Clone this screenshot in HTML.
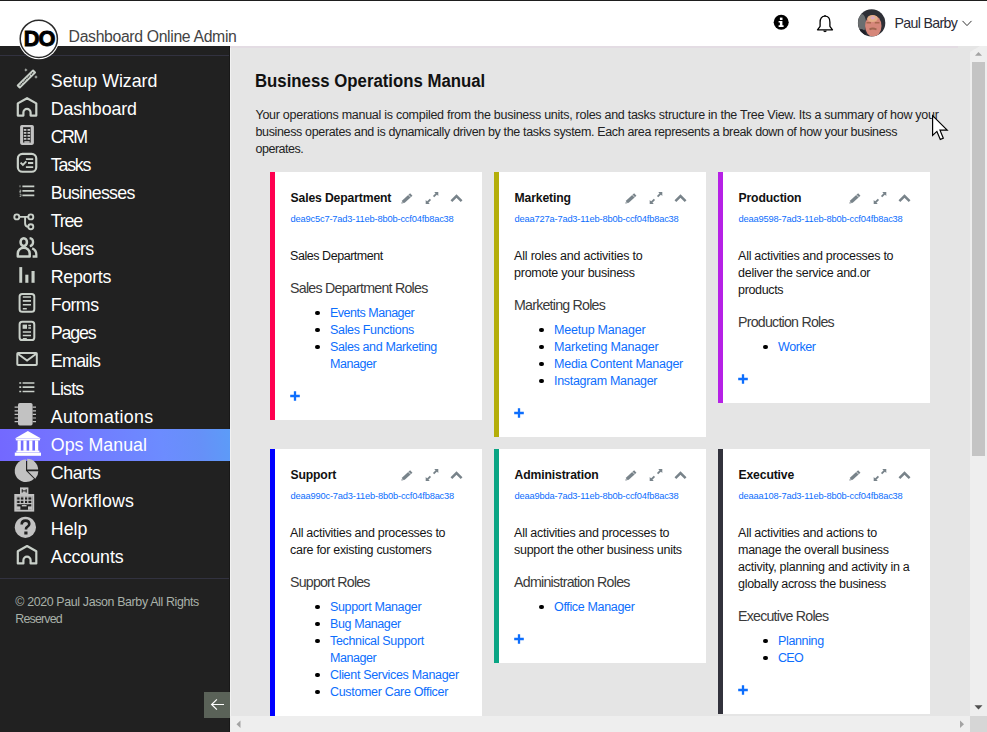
<!DOCTYPE html>
<html><head><meta charset="utf-8"><title>Business Operations Manual</title>
<style>
html,body{margin:0;padding:0;}
body{width:987px;height:732px;overflow:hidden;position:relative;background:#e5e5e5;font-family:"Liberation Sans",sans-serif;}
.t{position:absolute;white-space:nowrap;}
.a{position:absolute;}
svg{position:absolute;overflow:visible;}
</style></head><body>
<div class="a" style="left:0;top:0;width:987px;height:1px;background:#1e1e1e"></div><div class="a" style="left:0;top:1px;width:987px;height:45px;background:#fff"></div><div class="a" style="left:230px;top:46px;width:728px;height:2px;background:#e3dce3"></div><div class="a" style="left:0;top:46px;width:230px;height:686px;background:#212121"></div><div class="a" style="left:229px;top:46px;width:1px;height:686px;background:#181818"></div><div class="a" style="left:230px;top:48px;width:1px;height:684px;background:#f2f2f2"></div><div class="a" style="left:0;top:55px;width:229px;height:1px;background:#323240"></div><div class="a" style="left:0;top:578px;width:229px;height:1px;background:#323240"></div><svg style="left:0;top:0" width="80" height="70"><circle cx="38.8" cy="38.8" r="20.4" fill="#fff"/><circle cx="38.8" cy="38.8" r="18.6" fill="none" stroke="#2b2b2b" stroke-width="1.5"/></svg><div class="t" style="left:23.70px;top:25px;font-size:21.8px;line-height:27px;color:#000;font-weight:bold;letter-spacing:-0.900px;-webkit-text-stroke:0.9px #000;">DO</div>
<div class="t" style="left:68.60px;top:27px;font-size:15.8px;line-height:20px;color:#444;letter-spacing:-0.351px;">Dashboard Online Admin</div>
<div class="a" style="left:0;top:429px;width:230px;height:32px;background:linear-gradient(80deg,#7368ff 0%,#7474ff 26%,#6c8cff 70%,#6690f8 86%,#5c9cf8 100%)"></div><div class="t" style="left:50.80px;top:70px;font-size:17.8px;line-height:22px;color:#ffffff;letter-spacing:-0.012px;">Setup Wizard</div>
<div class="t" style="left:50.80px;top:98px;font-size:17.8px;line-height:22px;color:#ffffff;letter-spacing:-0.110px;">Dashboard</div>
<div class="t" style="left:50.80px;top:126px;font-size:17.8px;line-height:22px;color:#ffffff;letter-spacing:-1.665px;">CRM</div>
<div class="t" style="left:50.80px;top:154px;font-size:17.8px;line-height:22px;color:#ffffff;letter-spacing:-1.199px;">Tasks</div>
<div class="t" style="left:50.80px;top:182px;font-size:17.8px;line-height:22px;color:#ffffff;letter-spacing:-0.714px;">Businesses</div>
<div class="t" style="left:50.80px;top:210px;font-size:17.8px;line-height:22px;color:#ffffff;letter-spacing:-1.213px;">Tree</div>
<div class="t" style="left:50.80px;top:238px;font-size:17.8px;line-height:22px;color:#ffffff;letter-spacing:-0.769px;">Users</div>
<div class="t" style="left:50.80px;top:266px;font-size:17.8px;line-height:22px;color:#ffffff;letter-spacing:-0.286px;">Reports</div>
<div class="t" style="left:50.80px;top:294px;font-size:17.8px;line-height:22px;color:#ffffff;letter-spacing:-0.532px;">Forms</div>
<div class="t" style="left:50.80px;top:322px;font-size:17.8px;line-height:22px;color:#ffffff;letter-spacing:-1.166px;">Pages</div>
<div class="t" style="left:50.80px;top:350px;font-size:17.8px;line-height:22px;color:#ffffff;letter-spacing:-0.664px;">Emails</div>
<div class="t" style="left:50.80px;top:378px;font-size:17.8px;line-height:22px;color:#ffffff;letter-spacing:-0.774px;">Lists</div>
<div class="t" style="left:50.80px;top:406px;font-size:17.8px;line-height:22px;color:#ffffff;letter-spacing:0.345px;">Automations</div>
<div class="t" style="left:50.80px;top:434px;font-size:17.8px;line-height:22px;color:#ffffff;letter-spacing:0.036px;">Ops Manual</div>
<div class="t" style="left:50.80px;top:462px;font-size:17.8px;line-height:22px;color:#ffffff;letter-spacing:-0.444px;">Charts</div>
<div class="t" style="left:50.80px;top:490px;font-size:17.8px;line-height:22px;color:#ffffff;letter-spacing:0.193px;">Workflows</div>
<div class="t" style="left:50.80px;top:518px;font-size:17.8px;line-height:22px;color:#ffffff;letter-spacing:-0.005px;">Help</div>
<div class="t" style="left:50.80px;top:546px;font-size:17.8px;line-height:22px;color:#ffffff;letter-spacing:-0.030px;">Accounts</div>
<div class="t" style="left:15.30px;top:594px;font-size:12.4px;line-height:16px;color:#a9b1a9;letter-spacing:-0.359px;">© 2020 Paul Jason Barby All Rights</div>
<div class="t" style="left:15.30px;top:611px;font-size:12.4px;line-height:16px;color:#a9b1a9;letter-spacing:-0.796px;">Reserved</div>
<div class="a" style="left:204px;top:692px;width:26px;height:26px;background:#5a6258"></div><svg style="left:204px;top:692px" width="26" height="26"><path d="M7.6 12.5H20M12.9 7.4L7.6 12.5L12.9 17.6" stroke="#fff" stroke-width="1.2" fill="none"/></svg><div class="t" style="left:894.50px;top:14px;font-size:14.2px;line-height:18px;color:#2a2a35;letter-spacing:-0.663px;">Paul Barby</div>
<svg style="left:962px;top:20px" width="11" height="8"><path d="M0.5 0.9L5 5.6L9.5 0.9" stroke="#333" stroke-width="1" fill="none"/></svg><svg style="left:856px;top:8px" width="32" height="32"><defs><clipPath id="av"><circle cx="15.6" cy="14.9" r="13.7"/></clipPath></defs><g clip-path="url(#av)"><rect width="32" height="32" fill="#2e2f36"/><ellipse cx="6" cy="15" rx="4" ry="9" fill="#6a6e70"/><ellipse cx="17.3" cy="18" rx="8.2" ry="10.8" fill="#d6877a"/><ellipse cx="16.5" cy="10.5" rx="5.2" ry="3.4" fill="#e4ae88"/><ellipse cx="16.8" cy="9.8" rx="2.2" ry="1.6" fill="#d9a8c0"/><path d="M10.5 14.8H15M18.8 14.8H23.5" stroke="#a8684e" stroke-width="1.6"/><path d="M13.5 21.5Q16.5 19.5 20.5 21.5" stroke="#a06650" stroke-width="1.8" fill="none"/><ellipse cx="5" cy="27" rx="5" ry="6" fill="#1e1e26"/></g></svg><div class="t" style="left:254.90px;top:69px;font-size:19.2px;line-height:24px;color:#111;font-weight:bold;transform:scaleX(0.8743);transform-origin:0 0;">Business Operations Manual</div>
<div class="t" style="left:255.50px;top:107px;font-size:12.5px;line-height:16px;color:#222;letter-spacing:-0.274px;">Your operations manual is compiled from the business units, roles and tasks structure in the Tree View. Its a summary of how your</div>
<div class="t" style="left:255.50px;top:124px;font-size:12.5px;line-height:16px;color:#222;letter-spacing:-0.354px;">business operates and is dynamically driven by the tasks system. Each area represents a break down of how your business</div>
<div class="t" style="left:255.50px;top:141px;font-size:12.5px;line-height:16px;color:#222;letter-spacing:-0.489px;">operates.</div>
<div class="a" style="left:270px;top:172px;width:5px;height:248px;background:#ff0050"></div><div class="a" style="left:275px;top:172px;width:207px;height:248px;background:#fff"></div><div class="t" style="left:290.50px;top:191px;font-size:12.2px;line-height:15px;color:#111;font-weight:bold;letter-spacing:-0.137px;">Sales Department</div>
<div class="t" style="left:290.50px;top:213px;font-size:9.3px;line-height:12px;color:#0d6efd;letter-spacing:-0.174px;">dea9c5c7-7ad3-11eb-8b0b-ccf04fb8ac38</div>
<div class="t" style="left:290.10px;top:248px;font-size:12.5px;line-height:16px;color:#151515;letter-spacing:-0.457px;">Sales Department</div>
<div class="t" style="left:290.00px;top:279px;font-size:14.2px;line-height:18px;color:#3a3a3a;letter-spacing:-0.738px;">Sales Department Roles</div>
<div class="a" style="left:315.3px;top:310.90px;width:4.3px;height:4.3px;border-radius:50%;background:#000"></div><div class="t" style="left:330.00px;top:305px;font-size:12.5px;line-height:16px;color:#0d6efd;letter-spacing:-0.487px;">Events Manager</div>
<div class="a" style="left:315.3px;top:327.90px;width:4.3px;height:4.3px;border-radius:50%;background:#000"></div><div class="t" style="left:330.00px;top:322px;font-size:12.5px;line-height:16px;color:#0d6efd;letter-spacing:-0.330px;">Sales Functions</div>
<div class="a" style="left:315.3px;top:344.90px;width:4.3px;height:4.3px;border-radius:50%;background:#000"></div><div class="t" style="left:330.00px;top:339px;font-size:12.5px;line-height:16px;color:#0d6efd;letter-spacing:-0.369px;">Sales and Marketing</div>
<div class="t" style="left:330.00px;top:356px;font-size:12.5px;line-height:16px;color:#0d6efd;letter-spacing:-0.428px;">Manager</div>
<svg style="left:290px;top:391.20px" width="10" height="10"><path d="M5 0.2V9.8M0.2 5H9.8" stroke="#0d6efd" stroke-width="2.3"/></svg><svg style="left:401px;top:193px" width="12" height="12"><path d="M0.4 10.6L1.45 7.35L9.15 0.35L11.45 2.85L3.75 9.85Z" fill="#78838a"/><path d="M7.3 1.75L9.9 4.55" stroke="#fff" stroke-width="0.7"/><path d="M0.4 10.6L1.2 8.2L2.9 10Z" fill="#aab0b4"/></svg><svg style="left:425px;top:191px" width="15" height="15"><path d="M13.3 0.9V5L9.2 0.9Z M0.7 13.1V9L4.8 13.1Z" fill="#78838a"/><path d="M12.2 2L8.6 5.6M1.8 12L5.4 8.4" stroke="#78838a" stroke-width="1.8"/></svg><svg style="left:450px;top:193px" width="14" height="10"><path d="M1.4 8.2L6.5 3.1L11.6 8.2" stroke="#78838a" stroke-width="2.5" fill="none"/></svg><div class="a" style="left:494px;top:172px;width:5px;height:265px;background:#b4ae0a"></div><div class="a" style="left:499px;top:172px;width:207px;height:265px;background:#fff"></div><div class="t" style="left:514.50px;top:191px;font-size:12.2px;line-height:15px;color:#111;font-weight:bold;letter-spacing:-0.144px;">Marketing</div>
<div class="t" style="left:514.50px;top:213px;font-size:9.3px;line-height:12px;color:#0d6efd;letter-spacing:-0.175px;">deaa727a-7ad3-11eb-8b0b-ccf04fb8ac38</div>
<div class="t" style="left:514.10px;top:248px;font-size:12.5px;line-height:16px;color:#151515;letter-spacing:-0.207px;">All roles and activities to</div>
<div class="t" style="left:514.10px;top:265px;font-size:12.5px;line-height:16px;color:#151515;letter-spacing:-0.273px;">promote your business</div>
<div class="t" style="left:514.00px;top:296px;font-size:14.2px;line-height:18px;color:#3a3a3a;letter-spacing:-0.769px;">Marketing Roles</div>
<div class="a" style="left:539.3px;top:327.90px;width:4.3px;height:4.3px;border-radius:50%;background:#000"></div><div class="t" style="left:554.00px;top:322px;font-size:12.5px;line-height:16px;color:#0d6efd;letter-spacing:-0.223px;">Meetup Manager</div>
<div class="a" style="left:539.3px;top:344.90px;width:4.3px;height:4.3px;border-radius:50%;background:#000"></div><div class="t" style="left:554.00px;top:339px;font-size:12.5px;line-height:16px;color:#0d6efd;letter-spacing:-0.187px;">Marketing Manager</div>
<div class="a" style="left:539.3px;top:361.90px;width:4.3px;height:4.3px;border-radius:50%;background:#000"></div><div class="t" style="left:554.00px;top:356px;font-size:12.5px;line-height:16px;color:#0d6efd;letter-spacing:-0.241px;">Media Content Manager</div>
<div class="a" style="left:539.3px;top:378.90px;width:4.3px;height:4.3px;border-radius:50%;background:#000"></div><div class="t" style="left:554.00px;top:373px;font-size:12.5px;line-height:16px;color:#0d6efd;letter-spacing:-0.305px;">Instagram Manager</div>
<svg style="left:514px;top:408.20px" width="10" height="10"><path d="M5 0.2V9.8M0.2 5H9.8" stroke="#0d6efd" stroke-width="2.3"/></svg><svg style="left:625px;top:193px" width="12" height="12"><path d="M0.4 10.6L1.45 7.35L9.15 0.35L11.45 2.85L3.75 9.85Z" fill="#78838a"/><path d="M7.3 1.75L9.9 4.55" stroke="#fff" stroke-width="0.7"/><path d="M0.4 10.6L1.2 8.2L2.9 10Z" fill="#aab0b4"/></svg><svg style="left:649px;top:191px" width="15" height="15"><path d="M13.3 0.9V5L9.2 0.9Z M0.7 13.1V9L4.8 13.1Z" fill="#78838a"/><path d="M12.2 2L8.6 5.6M1.8 12L5.4 8.4" stroke="#78838a" stroke-width="1.8"/></svg><svg style="left:674px;top:193px" width="14" height="10"><path d="M1.4 8.2L6.5 3.1L11.6 8.2" stroke="#78838a" stroke-width="2.5" fill="none"/></svg><div class="a" style="left:718px;top:172px;width:5px;height:231px;background:#b620e6"></div><div class="a" style="left:723px;top:172px;width:207px;height:231px;background:#fff"></div><div class="t" style="left:738.50px;top:191px;font-size:12.2px;line-height:15px;color:#111;font-weight:bold;letter-spacing:-0.143px;">Production</div>
<div class="t" style="left:738.50px;top:213px;font-size:9.3px;line-height:12px;color:#0d6efd;letter-spacing:-0.175px;">deaa9598-7ad3-11eb-8b0b-ccf04fb8ac38</div>
<div class="t" style="left:738.10px;top:248px;font-size:12.5px;line-height:16px;color:#151515;letter-spacing:-0.284px;">All activities and processes to</div>
<div class="t" style="left:738.10px;top:265px;font-size:12.5px;line-height:16px;color:#151515;letter-spacing:-0.290px;">deliver the service and.or</div>
<div class="t" style="left:738.10px;top:282px;font-size:12.5px;line-height:16px;color:#151515;letter-spacing:-0.356px;">products</div>
<div class="t" style="left:738.00px;top:313px;font-size:14.2px;line-height:18px;color:#3a3a3a;letter-spacing:-0.757px;">Production Roles</div>
<div class="a" style="left:763.3px;top:344.90px;width:4.3px;height:4.3px;border-radius:50%;background:#000"></div><div class="t" style="left:778.00px;top:339px;font-size:12.5px;line-height:16px;color:#0d6efd;letter-spacing:-0.417px;">Worker</div>
<svg style="left:738px;top:374.20px" width="10" height="10"><path d="M5 0.2V9.8M0.2 5H9.8" stroke="#0d6efd" stroke-width="2.3"/></svg><svg style="left:849px;top:193px" width="12" height="12"><path d="M0.4 10.6L1.45 7.35L9.15 0.35L11.45 2.85L3.75 9.85Z" fill="#78838a"/><path d="M7.3 1.75L9.9 4.55" stroke="#fff" stroke-width="0.7"/><path d="M0.4 10.6L1.2 8.2L2.9 10Z" fill="#aab0b4"/></svg><svg style="left:873px;top:191px" width="15" height="15"><path d="M13.3 0.9V5L9.2 0.9Z M0.7 13.1V9L4.8 13.1Z" fill="#78838a"/><path d="M12.2 2L8.6 5.6M1.8 12L5.4 8.4" stroke="#78838a" stroke-width="1.8"/></svg><svg style="left:898px;top:193px" width="14" height="10"><path d="M1.4 8.2L6.5 3.1L11.6 8.2" stroke="#78838a" stroke-width="2.5" fill="none"/></svg><div class="a" style="left:270px;top:449px;width:5px;height:267px;background:#0000ff"></div><div class="a" style="left:275px;top:449px;width:207px;height:267px;background:#fff"></div><div class="t" style="left:290.50px;top:468px;font-size:12.2px;line-height:15px;color:#111;font-weight:bold;letter-spacing:-0.156px;">Support</div>
<div class="t" style="left:290.50px;top:490px;font-size:9.3px;line-height:12px;color:#0d6efd;letter-spacing:-0.175px;">deaa990c-7ad3-11eb-8b0b-ccf04fb8ac38</div>
<div class="t" style="left:290.10px;top:525px;font-size:12.5px;line-height:16px;color:#151515;letter-spacing:-0.284px;">All activities and processes to</div>
<div class="t" style="left:290.10px;top:542px;font-size:12.5px;line-height:16px;color:#151515;letter-spacing:-0.299px;">care for existing customers</div>
<div class="t" style="left:290.00px;top:573px;font-size:14.2px;line-height:18px;color:#3a3a3a;letter-spacing:-0.787px;">Support Roles</div>
<div class="a" style="left:315.3px;top:604.90px;width:4.3px;height:4.3px;border-radius:50%;background:#000"></div><div class="t" style="left:330.00px;top:599px;font-size:12.5px;line-height:16px;color:#0d6efd;letter-spacing:-0.359px;">Support Manager</div>
<div class="a" style="left:315.3px;top:621.90px;width:4.3px;height:4.3px;border-radius:50%;background:#000"></div><div class="t" style="left:330.00px;top:616px;font-size:12.5px;line-height:16px;color:#0d6efd;letter-spacing:-0.390px;">Bug Manager</div>
<div class="a" style="left:315.3px;top:638.90px;width:4.3px;height:4.3px;border-radius:50%;background:#000"></div><div class="t" style="left:330.00px;top:633px;font-size:12.5px;line-height:16px;color:#0d6efd;letter-spacing:-0.323px;">Technical Support</div>
<div class="t" style="left:330.00px;top:650px;font-size:12.5px;line-height:16px;color:#0d6efd;letter-spacing:-0.428px;">Manager</div>
<div class="a" style="left:315.3px;top:672.90px;width:4.3px;height:4.3px;border-radius:50%;background:#000"></div><div class="t" style="left:330.00px;top:667px;font-size:12.5px;line-height:16px;color:#0d6efd;letter-spacing:-0.322px;">Client Services Manager</div>
<div class="a" style="left:315.3px;top:689.90px;width:4.3px;height:4.3px;border-radius:50%;background:#000"></div><div class="t" style="left:330.00px;top:684px;font-size:12.5px;line-height:16px;color:#0d6efd;letter-spacing:-0.324px;">Customer Care Officer</div>
<svg style="left:290px;top:719.20px" width="10" height="10"><path d="M5 0.2V9.8M0.2 5H9.8" stroke="#0d6efd" stroke-width="2.3"/></svg><svg style="left:401px;top:470px" width="12" height="12"><path d="M0.4 10.6L1.45 7.35L9.15 0.35L11.45 2.85L3.75 9.85Z" fill="#78838a"/><path d="M7.3 1.75L9.9 4.55" stroke="#fff" stroke-width="0.7"/><path d="M0.4 10.6L1.2 8.2L2.9 10Z" fill="#aab0b4"/></svg><svg style="left:425px;top:468px" width="15" height="15"><path d="M13.3 0.9V5L9.2 0.9Z M0.7 13.1V9L4.8 13.1Z" fill="#78838a"/><path d="M12.2 2L8.6 5.6M1.8 12L5.4 8.4" stroke="#78838a" stroke-width="1.8"/></svg><svg style="left:450px;top:470px" width="14" height="10"><path d="M1.4 8.2L6.5 3.1L11.6 8.2" stroke="#78838a" stroke-width="2.5" fill="none"/></svg><div class="a" style="left:494px;top:449px;width:5px;height:214px;background:#0aa584"></div><div class="a" style="left:499px;top:449px;width:207px;height:214px;background:#fff"></div><div class="t" style="left:514.50px;top:468px;font-size:12.2px;line-height:15px;color:#111;font-weight:bold;letter-spacing:-0.132px;">Administration</div>
<div class="t" style="left:514.50px;top:490px;font-size:9.3px;line-height:12px;color:#0d6efd;letter-spacing:-0.175px;">deaa9bda-7ad3-11eb-8b0b-ccf04fb8ac38</div>
<div class="t" style="left:514.10px;top:525px;font-size:12.5px;line-height:16px;color:#151515;letter-spacing:-0.284px;">All activities and processes to</div>
<div class="t" style="left:514.10px;top:542px;font-size:12.5px;line-height:16px;color:#151515;letter-spacing:-0.297px;">support the other business units</div>
<div class="t" style="left:514.00px;top:573px;font-size:14.2px;line-height:18px;color:#3a3a3a;letter-spacing:-0.720px;">Administration Roles</div>
<div class="a" style="left:539.3px;top:604.90px;width:4.3px;height:4.3px;border-radius:50%;background:#000"></div><div class="t" style="left:554.00px;top:599px;font-size:12.5px;line-height:16px;color:#0d6efd;letter-spacing:-0.341px;">Office Manager</div>
<svg style="left:514px;top:634.20px" width="10" height="10"><path d="M5 0.2V9.8M0.2 5H9.8" stroke="#0d6efd" stroke-width="2.3"/></svg><svg style="left:625px;top:470px" width="12" height="12"><path d="M0.4 10.6L1.45 7.35L9.15 0.35L11.45 2.85L3.75 9.85Z" fill="#78838a"/><path d="M7.3 1.75L9.9 4.55" stroke="#fff" stroke-width="0.7"/><path d="M0.4 10.6L1.2 8.2L2.9 10Z" fill="#aab0b4"/></svg><svg style="left:649px;top:468px" width="15" height="15"><path d="M13.3 0.9V5L9.2 0.9Z M0.7 13.1V9L4.8 13.1Z" fill="#78838a"/><path d="M12.2 2L8.6 5.6M1.8 12L5.4 8.4" stroke="#78838a" stroke-width="1.8"/></svg><svg style="left:674px;top:470px" width="14" height="10"><path d="M1.4 8.2L6.5 3.1L11.6 8.2" stroke="#78838a" stroke-width="2.5" fill="none"/></svg><div class="a" style="left:718px;top:449px;width:5px;height:265px;background:#32323c"></div><div class="a" style="left:723px;top:449px;width:207px;height:265px;background:#fff"></div><div class="t" style="left:738.50px;top:468px;font-size:12.2px;line-height:15px;color:#111;font-weight:bold;letter-spacing:-0.142px;">Executive</div>
<div class="t" style="left:738.50px;top:490px;font-size:9.3px;line-height:12px;color:#0d6efd;letter-spacing:-0.175px;">deaaa108-7ad3-11eb-8b0b-ccf04fb8ac38</div>
<div class="t" style="left:738.10px;top:525px;font-size:12.5px;line-height:16px;color:#151515;letter-spacing:-0.272px;">All activities and actions to</div>
<div class="t" style="left:738.10px;top:542px;font-size:12.5px;line-height:16px;color:#151515;letter-spacing:-0.318px;">manage the overall business</div>
<div class="t" style="left:738.10px;top:559px;font-size:12.5px;line-height:16px;color:#151515;letter-spacing:-0.269px;">activity, planning and activity in a</div>
<div class="t" style="left:738.10px;top:576px;font-size:12.5px;line-height:16px;color:#151515;letter-spacing:-0.301px;">globally across the business</div>
<div class="t" style="left:738.00px;top:607px;font-size:14.2px;line-height:18px;color:#3a3a3a;letter-spacing:-0.764px;">Executive Roles</div>
<div class="a" style="left:763.3px;top:638.90px;width:4.3px;height:4.3px;border-radius:50%;background:#000"></div><div class="t" style="left:778.00px;top:633px;font-size:12.5px;line-height:16px;color:#0d6efd;letter-spacing:-0.361px;">Planning</div>
<div class="a" style="left:763.3px;top:655.90px;width:4.3px;height:4.3px;border-radius:50%;background:#000"></div><div class="t" style="left:778.00px;top:650px;font-size:12.5px;line-height:16px;color:#0d6efd;letter-spacing:-0.704px;">CEO</div>
<svg style="left:738px;top:685.20px" width="10" height="10"><path d="M5 0.2V9.8M0.2 5H9.8" stroke="#0d6efd" stroke-width="2.3"/></svg><svg style="left:849px;top:470px" width="12" height="12"><path d="M0.4 10.6L1.45 7.35L9.15 0.35L11.45 2.85L3.75 9.85Z" fill="#78838a"/><path d="M7.3 1.75L9.9 4.55" stroke="#fff" stroke-width="0.7"/><path d="M0.4 10.6L1.2 8.2L2.9 10Z" fill="#aab0b4"/></svg><svg style="left:873px;top:468px" width="15" height="15"><path d="M13.3 0.9V5L9.2 0.9Z M0.7 13.1V9L4.8 13.1Z" fill="#78838a"/><path d="M12.2 2L8.6 5.6M1.8 12L5.4 8.4" stroke="#78838a" stroke-width="1.8"/></svg><svg style="left:898px;top:470px" width="14" height="10"><path d="M1.4 8.2L6.5 3.1L11.6 8.2" stroke="#78838a" stroke-width="2.5" fill="none"/></svg><svg style="left:0;top:0" width="230" height="732"><g transform="rotate(-44.5 26.4 79)"><rect x="14.7" y="76.6" width="23.4" height="4.8" rx="1" fill="#c9d0c9"/><path d="M17 79H31.2M32.6 79H36.2" stroke="#212121" stroke-width="1.2" stroke-dasharray="1.3 0.6"/></g><path d="M25.9 68.10000000000001L26.4 69.4L27.7 69.9L26.4 70.4L25.9 71.7L25.4 70.4L24.099999999999998 69.9L25.4 69.4Z M36 75.1L36.5 76.5L37.9 77L36.5 77.5L36 78.9L35.5 77.5L34.1 77L35.5 76.5Z" fill="#c9d0c9"/><path d="M23.4 115.6H17.8V103.4L27.05 98.2L36.3 103.4V115.6H30.6V112.5A3.6 3.6 0 0 0 23.4 112.5Z" fill="none" stroke="#c9d0c9" stroke-width="2.2" stroke-linejoin="round"/><rect x="20.1" y="125" width="13.8" height="19.9" rx="1.8" fill="#c2c2c2"/><rect x="23.1" y="127.2" width="7.6" height="15.4" fill="#212121"/><rect x="23.8" y="129.0" width="2.6" height="1.8" fill="#c2c2c2"/><rect x="27.5" y="129.0" width="2.6" height="1.8" fill="#c2c2c2"/><rect x="23.8" y="132.0" width="2.6" height="1.8" fill="#c2c2c2"/><rect x="27.5" y="132.0" width="2.6" height="1.8" fill="#c2c2c2"/><rect x="23.8" y="135.0" width="2.6" height="1.8" fill="#c2c2c2"/><rect x="27.5" y="135.0" width="2.6" height="1.8" fill="#c2c2c2"/><rect x="23.8" y="138.0" width="2.6" height="1.8" fill="#c2c2c2"/><rect x="27.5" y="138.0" width="2.6" height="1.8" fill="#c2c2c2"/><rect x="24.3" y="141.2" width="5.3" height="1.6" fill="#c2c2c2"/><rect x="17.85" y="153.95" width="18.4" height="17.8" rx="4.6" fill="none" stroke="#c9d0c9" stroke-width="2.2"/><path d="M25.9 159.1H33.2M28 163H33.2M25.9 167.05H33.2" stroke="#c9d0c9" stroke-width="1.8"/><path d="M20.6 162.6L22.9 164.9L26.3 161.4" stroke="#c9d0c9" stroke-width="1.9" fill="none"/><path d="M22.4 186.3H34.3M22.4 190.9H34.3M22.4 195.3H34.3" stroke="#c9d0c9" stroke-width="1.8"/><path d="M20 185.3V187.3M19.6 190.2H20.8V191.6H19.6V192.2H21M19.6 194.2H21V196.4H19.6" stroke="#c9d0c9" stroke-width="0.7" fill="none"/><g fill="none" stroke="#c9d0c9" stroke-width="1.9"><circle cx="16.8" cy="216.9" r="2.5"/><circle cx="30.8" cy="216.9" r="2.5"/><circle cx="30.8" cy="226.8" r="2.5"/><path d="M19.3 216.9H28.3M25.1 216.9V223.3Q25.1 226.8 28.3 226.8"/></g><g fill="none" stroke="#c9d0c9" stroke-width="2.5" stroke-linejoin="round"><ellipse cx="23.75" cy="242.1" rx="3.2" ry="3.9"/><path d="M17.8 256.6V253.4A5.95 5.6 0 0 1 29.7 253.4V256.6Z"/></g><g fill="none" stroke="#c9d0c9" stroke-width="2.3"><path d="M29.6 238.1A4 4.1 0 0 1 29.8 246.2"/><path d="M32.2 248.4Q36.3 250.2 36.3 254.2V256.5H32.6"/></g><rect x="19.3" y="267.1" width="2.9" height="15.7" fill="#c9d0c9"/><rect x="25.3" y="274.7" width="3.1" height="8.1" fill="#c9d0c9"/><rect x="31.5" y="271" width="3.1" height="11.8" fill="#c9d0c9"/><rect x="19.6" y="294" width="14.7" height="17.8" rx="2.6" fill="none" stroke="#c9d0c9" stroke-width="2"/><path d="M22.8 297H31M22.8 300.9H31M22.8 304.8H31M22.8 308.8H26.8" stroke="#c9d0c9" stroke-width="1.6"/><rect x="19.6" y="321.8" width="14.7" height="18.2" rx="2.6" fill="none" stroke="#c9d0c9" stroke-width="2"/><rect x="22.6" y="324.6" width="4.4" height="4.2" fill="#c9d0c9"/><path d="M28.3 325.4H31M28.3 328.1H31M22.8 332H31M22.8 335.5H31M22.8 338.8H26.8" stroke="#c9d0c9" stroke-width="1.5"/><rect x="17.3" y="353" width="19.5" height="12" rx="0.8" fill="none" stroke="#c9d0c9" stroke-width="2"/><path d="M17.8 353.8L27.05 360.6L36.3 353.8" fill="none" stroke="#c9d0c9" stroke-width="2"/><path d="M22.6 383H34.4M22.6 387.2H34.4M22.6 391.5H34.4M19.3 383H21.2M19.3 387.2H21.2M19.3 391.5H21.2" stroke="#c9d0c9" stroke-width="1.7"/><rect x="18" y="403" width="14.6" height="22.6" rx="1.8" fill="#c2c2c2"/><path d="M14.6 407.2H18M32.6 407.2H36" stroke="#c2c2c2" stroke-width="1.2"/><path d="M14.6 410.8H18M32.6 410.8H36" stroke="#c2c2c2" stroke-width="1.2"/><path d="M14.6 414.4H18M32.6 414.4H36" stroke="#c2c2c2" stroke-width="1.2"/><path d="M14.6 418H18M32.6 418H36" stroke="#c2c2c2" stroke-width="1.2"/><path d="M14.6 421.6H18M32.6 421.6H36" stroke="#c2c2c2" stroke-width="1.2"/><path d="M14.8 438.4L27.9 431L41 438.4Z" fill="#fff"/><rect x="15.8" y="438.6" width="24.2" height="1.8" fill="#fff"/><rect x="14.8" y="452.6" width="26.2" height="3.2" fill="#fff"/><rect x="16.4" y="450.6" width="23" height="1.8" fill="#fff"/><rect x="17.6" y="440.4" width="3.2" height="10.4" fill="#fff"/><rect x="23.4" y="440.4" width="3.2" height="10.4" fill="#fff"/><rect x="29.2" y="440.4" width="3.2" height="10.4" fill="#fff"/><rect x="35.0" y="440.4" width="3.2" height="10.4" fill="#fff"/><path d="M26 470.8V459.5A11.3 11.3 0 1 0 34 478.8Z" fill="#c2c2c2"/><path d="M27.2 469.6V458.7A10.9 10.9 0 0 1 38.1 469.6Z" fill="#c2c2c2"/><path d="M27.9 471.3H38.3A10.6 10.6 0 0 1 35.3 478.7Z" fill="#c2c2c2"/><rect x="20" y="487.4" width="8.4" height="7" fill="#c2c2c2"/><path d="M22.2 489.2V492.6M26.2 489.2V492.6M22.2 490.9H26.2" stroke="#212121" stroke-width="1"/><rect x="14.3" y="494" width="19.9" height="17.6" fill="#c2c2c2"/><rect x="16.2" y="496.2" width="16.1" height="13.6" fill="#212121"/><rect x="16.2" y="496.2" width="16.1" height="1.2" fill="#c2c2c2"/><rect x="16.2" y="499.6" width="16.1" height="1.2" fill="#c2c2c2"/><rect x="16.2" y="503" width="16.1" height="1.2" fill="#c2c2c2"/><rect x="19.6" y="496.2" width="1.2" height="8" fill="#c2c2c2"/><rect x="23.4" y="496.2" width="1.6" height="8" fill="#c2c2c2"/><rect x="27.2" y="496.2" width="1.2" height="8" fill="#c2c2c2"/><rect x="16.2" y="496.2" width="1" height="13.6" fill="#c2c2c2"/><rect x="31.3" y="496.2" width="1" height="13.6" fill="#c2c2c2"/><rect x="16.2" y="506.4" width="4.2" height="3.4" fill="#c2c2c2"/><rect x="28" y="506.4" width="4.2" height="3.4" fill="#c2c2c2"/><rect x="21.8" y="505" width="4.8" height="1.4" fill="#c2c2c2"/><circle cx="25.4" cy="527.3" r="10.6" fill="#c2c2c2"/><path d="M21.7 524.4Q21.7 520.6 25.5 520.6Q29.3 520.6 29.3 524Q29.3 526 27 527.2Q26 527.8 26 529V529.6" fill="none" stroke="#212121" stroke-width="2.6"/><rect x="24.3" y="531.5" width="3.2" height="3" fill="#212121"/><path d="M23.4 563.4H17.8V551.2L27.05 546.0L36.3 551.2V563.4H30.6V560.3A3.6 3.6 0 0 0 23.4 560.3Z" fill="none" stroke="#c9d0c9" stroke-width="2.2" stroke-linejoin="round"/></svg>
<div class="a" style="left:970px;top:46px;width:17px;height:670px;background:#eeeeee"></div><div class="a" style="left:972px;top:62px;width:13px;height:394px;background:#c4c4c4"></div><svg style="left:969px;top:46px" width="14" height="8"><path d="M0 0H11L0 6.5Z" fill="#e5e5e5"/></svg><svg style="left:970px;top:46px" width="17" height="14"><path d="M5 9.7L8.5 6L12 9.7Z" fill="#a3a3a3"/></svg><svg style="left:970px;top:700px" width="17" height="14"><path d="M4.5 5.2L12.5 5.2L8.5 9.5Z" fill="#505050"/></svg><div class="a" style="left:230px;top:716px;width:740px;height:16px;background:#eeeeee"></div><div class="a" style="left:970px;top:716px;width:17px;height:16px;background:#d6d6d6"></div><svg style="left:230px;top:716px" width="17" height="16"><path d="M10.5 4.5V12L6.5 8.2Z" fill="#a3a3a3"/></svg><svg style="left:953px;top:716px" width="17" height="16"><path d="M7 4.5V12L11 8.2Z" fill="#a3a3a3"/></svg><svg style="left:773px;top:14px" width="16" height="16"><circle cx="8.2" cy="8.3" r="7.5" fill="#000"/><rect x="6.9" y="3.6" width="2.6" height="2.4" fill="#fff"/><path d="M5.6 7H9.4V11.3H10.6V13H5.6V11.3H6.9V8.6H5.6Z" fill="#fff"/></svg><svg style="left:816px;top:14px" width="18" height="19"><path d="M9 2.2C5.6 2.2 4.1 4.8 4.1 8.2V12.3L1.5 15.8H16.5L13.9 12.3V8.2C13.9 4.8 12.4 2.2 9 2.2Z" fill="none" stroke="#000" stroke-width="1.3" stroke-linejoin="round"/><path d="M9 0.9V2.2M7.6 16.6Q9 18.4 10.4 16.6" stroke="#000" stroke-width="1.3" fill="none"/></svg><svg style="left:932px;top:115px" width="17" height="26"><path d="M0.6 0.6V20.4L4.9 16.4L8.3 24.4L11.3 23.2L8 15.2H15.2Z" fill="#fff" stroke="#000" stroke-width="1.2" stroke-linejoin="miter"/></svg></body></html>
